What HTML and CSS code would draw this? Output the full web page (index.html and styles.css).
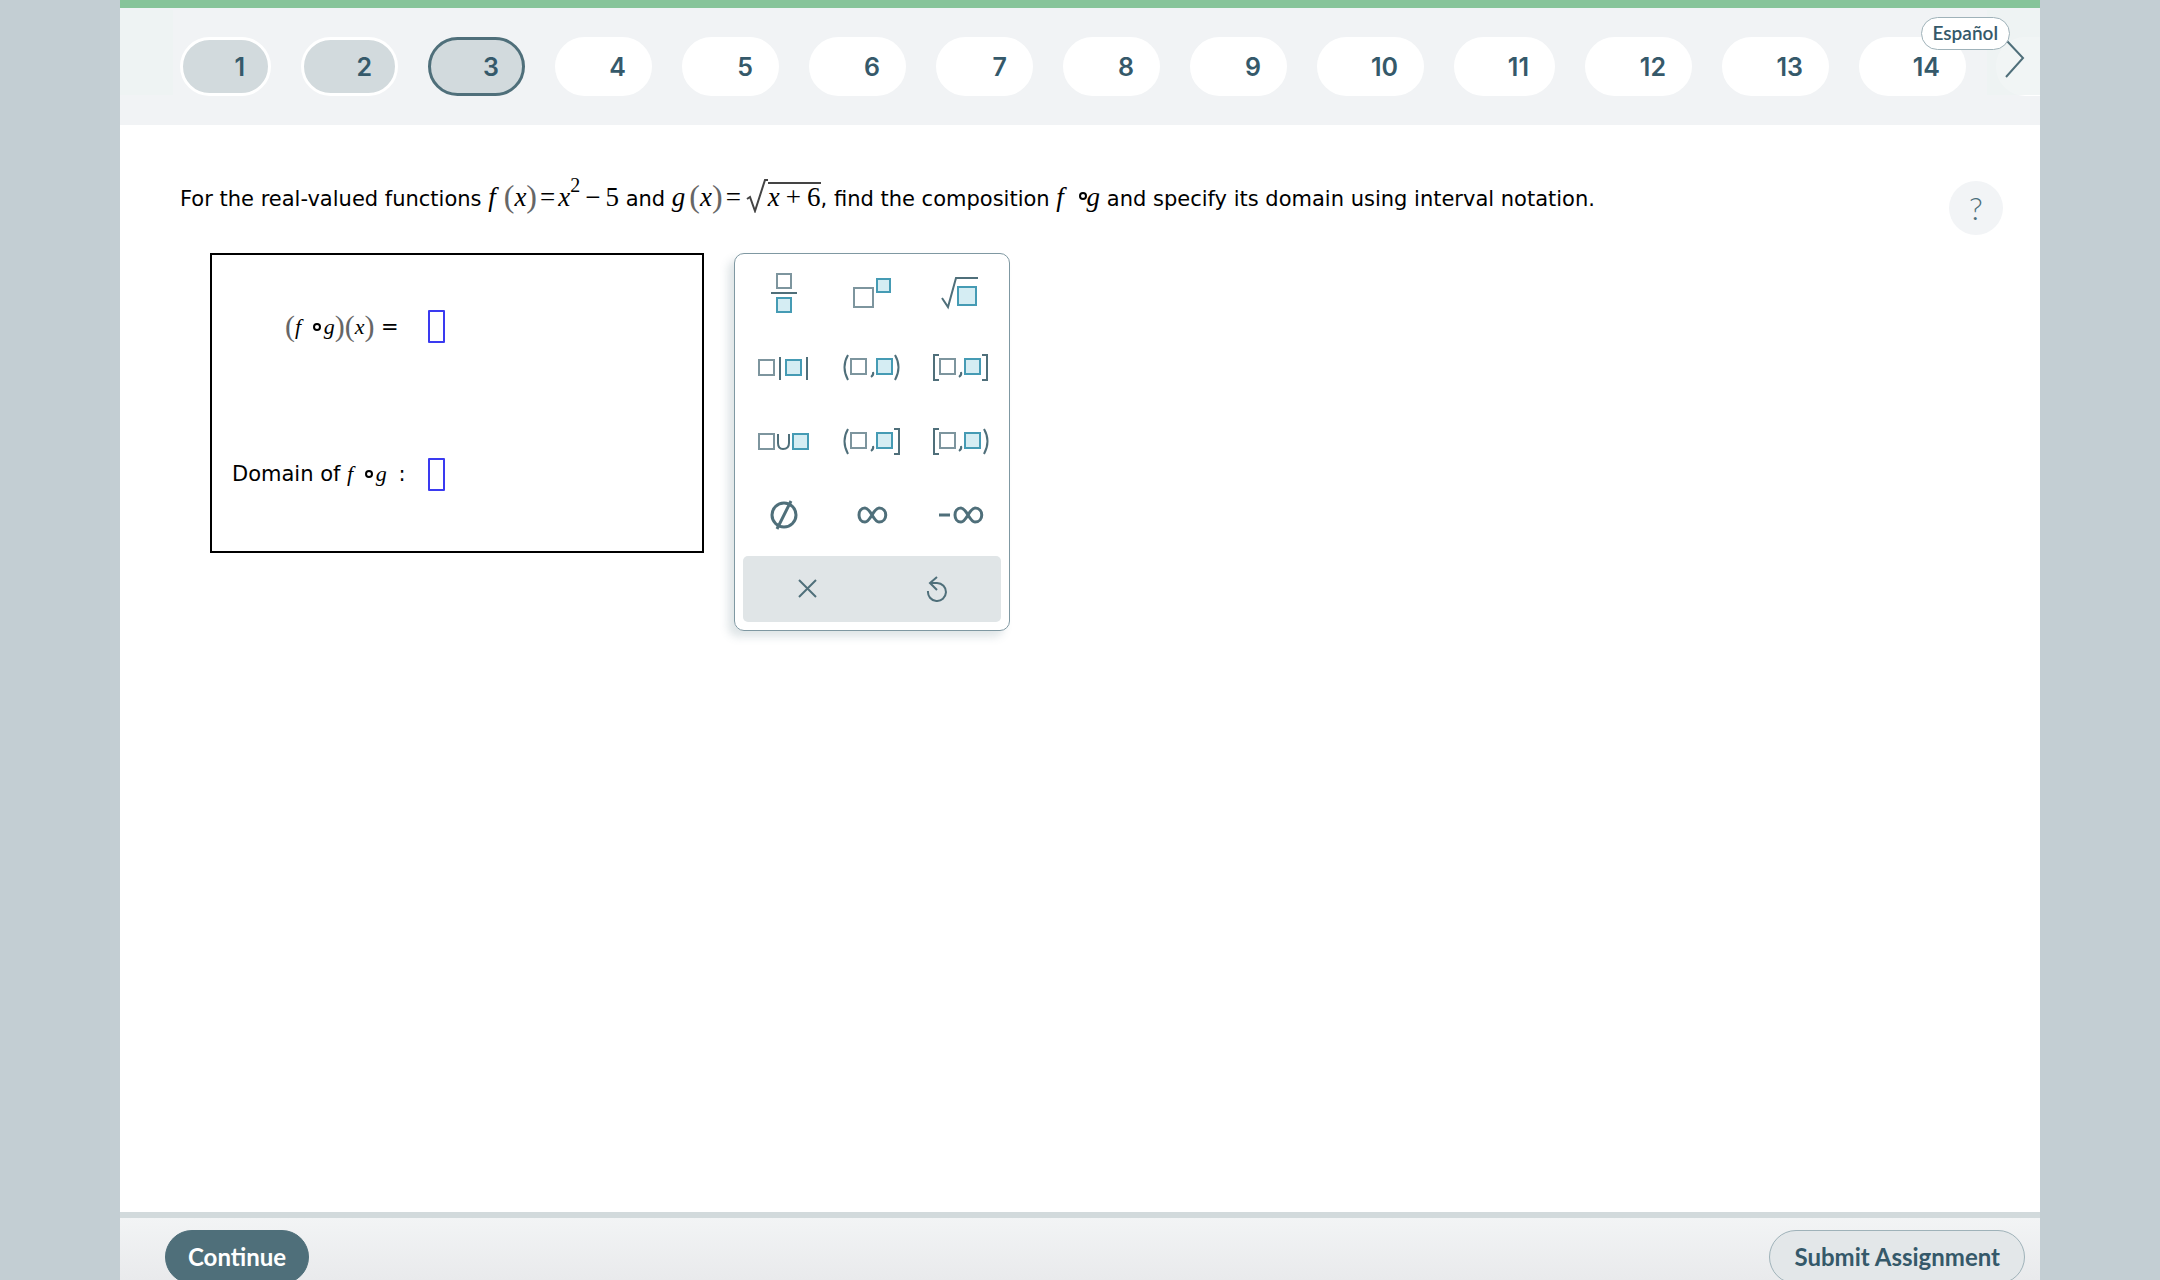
FILE: index.html
```html
<!DOCTYPE html>
<html lang="en">
<head>
  <meta charset="utf-8">
  <title>Assignment - Question 3</title>
  <link rel="stylesheet" href="styles.css">
</head>
<body>
  <div class="page">
    <header class="topbar">
      <nav class="questions">
        <a class="pill done first" href="#q1">1</a>
        <a class="pill done" href="#q2">2</a>
        <a class="pill done current" href="#q3">3</a>
        <a class="pill" href="#q4">4</a>
        <a class="pill" href="#q5">5</a>
        <a class="pill" href="#q6">6</a>
        <a class="pill" href="#q7">7</a>
        <a class="pill" href="#q8">8</a>
        <a class="pill" href="#q9">9</a>
        <a class="pill wide" href="#q10">10</a>
        <a class="pill wide eleven" href="#q11">11</a>
        <a class="pill wide" href="#q12">12</a>
        <a class="pill wide" href="#q13">13</a>
        <a class="pill wide" href="#q14">14</a>
        <a class="pill wide" href="#q15" aria-label="15"></a>
      </nav>
      <div class="fade fade-left"></div>
      <button class="fade fade-right" aria-label="Next questions">
        <svg width="20" height="38" viewBox="0 0 20 38"><path d="M2 1 L18 18 L1 37"/></svg>
      </button>
      <button class="language">Español</button>
    </header>

    <main class="content">
      <section class="problem">
        <p class="question">For the real-valued functions <span class="math"><i class="f">f</i><span class="paren">(</span><i>x</i><span class="paren">)</span><span class="op">=</span><i>x</i><sup>2</sup><span class="op minus">−</span>5</span> and <span class="math"><i class="g">g</i><span class="paren">(</span><i>x</i><span class="paren">)</span><span class="op">=</span><svg class="radical" width="22" height="34" viewBox="0 0 22 34"><path d="M1 20 L4 18 L9 32 L19 1 L22 1"/></svg><span class="root"><i>x</i><span class="op">+</span>6</span></span>, find the composition <span class="math"><i class="f">f</i> <span class="ring"></span><i>g</i></span> and specify its domain using interval notation.</p>

        <div class="work">
          <form class="answers">
            <label class="composed" for="composition"><span class="math small"><span class="paren">(</span><i class="f">f</i> <span class="ring"></span><i>g</i><span class="paren">)</span><span class="paren">(</span><i>x</i><span class="paren">)</span></span> =</label>
            <input class="slot" id="composition" type="text">
            <label for="domain">Domain of <span class="math small domain"><i class="f">f</i> <span class="ring"></span><i>g</i></span> :</label>
            <input class="slot" id="domain" type="text">
          </form>

          <div class="palette">
            <div class="keys">
              <button class="key" aria-label="Fraction">
                <svg viewBox="0 0 60 44"><rect class="blank" x="23" y="3" width="14" height="14"/><path d="M17 22 H43"/><rect class="fill" x="23" y="27" width="14" height="14"/></svg>
              </button>
              <button class="key" aria-label="Exponent">
                <svg viewBox="0 0 60 44"><rect class="blank" x="12" y="17" width="19" height="19"/><rect class="fill" x="35" y="8" width="13" height="13"/></svg>
              </button>
              <button class="key" aria-label="Square root">
                <svg viewBox="0 0 60 44"><path d="M12 27 L18 36 L26 7 H48"/><rect class="fill" x="28" y="16" width="18" height="18"/></svg>
              </button>
              <button class="key" aria-label="Absolute value">
                <svg viewBox="0 0 60 44"><rect class="blank" x="5" y="15" width="15" height="15"/><path d="M26 12 V35 M53 12 V35"/><rect class="fill" x="32" y="15" width="15" height="15"/></svg>
              </button>
              <button class="key" aria-label="Open interval">
                <svg viewBox="0 0 60 44"><path d="M6 10 Q-1 22 6 35"/><rect class="blank" x="9" y="14" width="15" height="15"/><path class="comma" d="M31 27 Q32 30 29 32"/><rect class="fill" x="35" y="14" width="15" height="15"/><path d="M53 10 Q60 22 53 35"/></svg>
              </button>
              <button class="key" aria-label="Closed interval">
                <svg viewBox="0 0 60 44"><path d="M9 10 H4 V35 H9"/><rect class="blank" x="10" y="14" width="15" height="15"/><path class="comma" d="M31 27 Q32 30 29 32"/><rect class="fill" x="35" y="14" width="15" height="15"/><path d="M52 10 H57 V35 H52"/></svg>
              </button>
              <button class="key" aria-label="Union">
                <svg viewBox="0 0 60 44"><rect class="blank" x="5" y="15" width="15" height="15"/><path d="M24 15 V24 Q24 30 29 30 Q35 30 35 24 V15"/><rect class="fill" x="39" y="15" width="15" height="15"/></svg>
              </button>
              <button class="key" aria-label="Left open interval">
                <svg viewBox="0 0 60 44"><path d="M6 10 Q-1 22 6 35"/><rect class="blank" x="9" y="14" width="15" height="15"/><path class="comma" d="M31 27 Q32 30 29 32"/><rect class="fill" x="35" y="14" width="15" height="15"/><path d="M52 10 H57 V35 H52"/></svg>
              </button>
              <button class="key" aria-label="Right open interval">
                <svg viewBox="0 0 60 44"><path d="M9 10 H4 V35 H9"/><rect class="blank" x="10" y="14" width="15" height="15"/><path class="comma" d="M31 27 Q32 30 29 32"/><rect class="fill" x="35" y="14" width="15" height="15"/><path d="M54 10 Q61 22 54 35"/></svg>
              </button>
              <button class="key" aria-label="Empty set">
                <svg viewBox="0 0 60 44"><circle class="heavy" cx="30" cy="22" r="12"/><path class="heavy" d="M37 8 L23 36"/></svg>
              </button>
              <button class="key" aria-label="Infinity">
                <svg viewBox="0 0 60 44"><path class="heavy" d="M30 22 C27 17 25 15 23 15 C15 15 15 29 23 29 C25 29 27 27 30 22 C33 17 35 15 37 15 C46 15 46 29 37 29 C35 29 33 27 30 22 Z"/></svg>
              </button>
              <button class="key" aria-label="Negative infinity">
                <svg viewBox="0 0 60 44"><path class="heavy" d="M9 22 H20 M38 22 C35 17 33 15 31 15 C23 15 23 29 31 29 C33 29 35 27 38 22 C41 17 43 15 45 15 C54 15 54 29 45 29 C43 29 41 27 38 22 Z"/></svg>
              </button>
            </div>
            <div class="tools">
              <button class="tool" aria-label="Clear">
                <svg width="28" height="28" viewBox="0 0 28 28"><path d="M5 6 L22 23 M22 6 L5 23"/></svg>
              </button>
              <button class="tool" aria-label="Undo">
                <svg width="28" height="28" viewBox="0 0 28 28"><path d="M5 17 A9 9 0 1 0 14 9 H7 M14 3 L7 9 L14 16"/></svg>
              </button>
            </div>
          </div>
        </div>
      </section>
      <button class="help">?</button>
    </main>

    <footer class="actions">
      <button class="continue">Continue</button>
      <button class="submit">Submit Assignment</button>
    </footer>
  </div>
</body>
</html>
```
FILE: styles.css
```css
* {
  box-sizing: border-box;
}

body {
  margin: 0;
  padding: 0 120px;
  background-color: #c3ced3;
  color: #000;
  font-family: "DejaVu Sans", Verdana, sans-serif;
  font-size: 21px;
}

button {
  padding: 0;
  border: none;
  background: none;
  font-family: Lato, sans-serif;
  cursor: pointer;
}

svg path,
svg circle,
svg rect {
  fill: none;
  stroke: #4f6f7a;
  stroke-width: 2;
}

.page {
  display: flex;
  flex-direction: column;
  height: 100vh;
  background-color: #fff;
  overflow: hidden;
}

/* question navigation */
.topbar {
  position: relative;
  border-top: 8px solid #87c49a;
  background-color: #f1f3f5;
}

.questions {
  display: flex;
  gap: 30px;
  padding: 29px 0 29px 60px;
  overflow: hidden;
}

.pill {
  flex: none;
  width: 97px;
  height: 59px;
  padding-right: 23px;
  border: 3px solid #fff;
  border-radius: 30px;
  background-color: #fff;
  color: #35596a;
  font-family: Inter, sans-serif;
  font-size: 25px;
  font-weight: 600;
  line-height: 55px;
  text-align: right;
  text-decoration: none;
}

.first {
  width: 91px;
}

.wide {
  width: 107px;
}

.eleven {
  width: 101px;
}

.done {
  background-color: #d2dadd;
}

.current {
  border-color: #4f6f7a;
}

.fade {
  position: absolute;
  top: 2px;
  width: 53px;
  height: 85px;
  background-color: rgba(238, 242, 243, 0.8);
}

.fade-left {
  left: 0;
}

.fade-right {
  right: 0;
  display: flex;
  align-items: center;
  padding: 12px 0 0 18px;
}

.language {
  position: absolute;
  top: 9px;
  right: 30px;
  height: 33px;
  padding: 0 11px 2px;
  border: 1px solid #9fb2b9;
  border-radius: 17px;
  background-color: #fff;
  color: #35596a;
  font-size: 19px;
  font-weight: 600;
}

/* problem */
.content {
  display: flex;
  flex: 1;
  justify-content: space-between;
  align-items: flex-start;
  padding: 49px 37px 0 60px;
}

.question {
  margin: 0 0 29px;
  line-height: 50px;
}

.help {
  flex: none;
  width: 54px;
  height: 54px;
  margin-top: 7px;
  padding-bottom: 2px;
  border-radius: 50%;
  background-color: #f2f4f6;
  color: #4f6f7a;
  font-size: 32px;
  font-weight: 300;
}

.math {
  font-family: "Liberation Serif", serif;
  font-size: 27px;
  line-height: 1;
  white-space: nowrap;
}

.math sup {
  font-size: 20px;
  line-height: 0;
  vertical-align: 14px;
}

.f {
  margin-right: 8px;
}

.g {
  margin-right: 4px;
}

.paren {
  color: #666;
  font-size: 32px;
  line-height: 1;
  vertical-align: -1px;
}

.op {
  margin: 0 3px;
}

.minus {
  margin: 0 5px;
}

.radical {
  margin-left: 2px;
  vertical-align: -7px;
}

.radical path {
  stroke: #444;
}

.root {
  display: inline-block;
  border-top: 2px solid #444;
}

.root .op {
  margin: 0 6px;
}

.ring {
  display: inline-block;
  width: 8px;
  height: 8px;
  border: 2px solid #000;
  border-radius: 50%;
  vertical-align: 6px;
}

.work {
  display: flex;
  align-items: flex-start;
  gap: 30px;
  margin-left: 30px;
}

.answers {
  display: grid;
  grid-template-columns: 196px 1fr;
  grid-template-rows: 142px 154px;
  align-items: center;
  width: 494px;
  padding-left: 20px;
  border: 2px solid #000;
}

.composed {
  margin-left: 53px;
}

.small {
  font-size: 22px;
}

.small .f {
  margin-right: 6px;
}

.small .paren {
  font-size: 30px;
  vertical-align: -2px;
}

.small .ring {
  margin-right: 3px;
  vertical-align: 3px;
}

.domain {
  margin-right: 5px;
}

.slot {
  width: 17px;
  height: 33px;
  padding: 0;
  border: 2px solid #3a3af0;
  border-radius: 1px;
}

/* symbol palette */
.palette {
  width: 276px;
  padding: 2px 5px 8px;
  border: 1px solid #7f98a2;
  border-radius: 10px;
  box-shadow: -6px 6px 8px rgba(79, 111, 122, 0.18);
}

.keys {
  display: grid;
  grid-template-columns: repeat(3, 1fr);
}

.key {
  height: 74px;
}

.key svg {
  display: block;
  width: 60px;
  height: 44px;
  margin: 0 auto;
}

.key .blank {
  stroke: #7d959e;
}

.key .fill {
  fill: #d5edf3;
  stroke: #459bb4;
}

.key .heavy {
  stroke-width: 3;
}

.tools {
  display: flex;
  margin: 4px 3px 0;
  border-radius: 5px;
  background-color: #e0e5e7;
}

.tool {
  flex: 1;
  height: 66px;
}

/* bottom bar */
.actions {
  display: flex;
  flex: none;
  justify-content: space-between;
  align-items: flex-start;
  height: 68px;
  padding: 12px 15px 0 45px;
  border-top: 6px solid #d2dadc;
  background: linear-gradient(#f2f4f5, #e9eaec);
}

.continue,
.submit {
  height: 54px;
  padding: 0 22px 2px;
  border: 1px solid #4f6f7a;
  border-radius: 27px;
  background-color: #4f6f7a;
  color: #fff;
  font-size: 24px;
  font-weight: 700;
}

.submit {
  padding: 0 24px 2px;
  border-color: #9fb2b9;
  background-color: #e3e7e9;
  color: #35596a;
}
```
